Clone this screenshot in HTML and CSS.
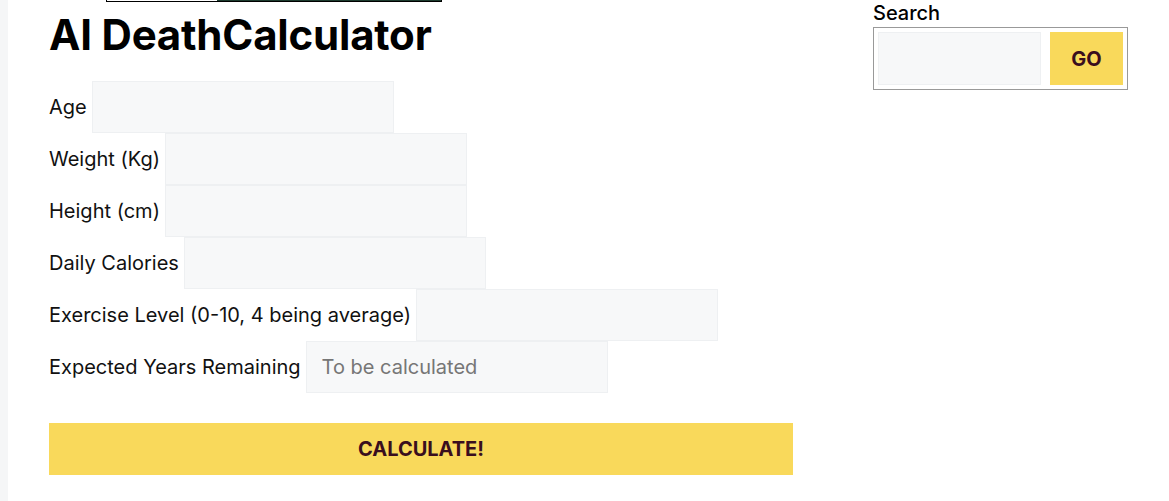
FILE: index.html
```html
<!DOCTYPE html>
<html lang="en">
<head>
<meta charset="utf-8">
<title>AI DeathCalculator</title>
<link rel="stylesheet" href="styles.css">
</head>
<body>
<div class="page">
  <main class="main">
    <div class="topbar"></div>
    <h1 class="title">AI DeathCalculator</h1>
    <form class="calc">
      <div class="row"><label class="lbl">Age</label><input class="field" type="text"></div>
      <div class="row"><label class="lbl">Weight (Kg)</label><input class="field" type="text"></div>
      <div class="row"><label class="lbl">Height (cm)</label><input class="field" type="text"></div>
      <div class="row"><label class="lbl">Daily Calories</label><input class="field" type="text"></div>
      <div class="row"><label class="lbl">Exercise Level (0-10, 4 being average)</label><input class="field" type="text"></div>
      <div class="row"><label class="lbl">Expected Years Remaining</label><input class="field" type="text" placeholder="To be calculated"></div>
      <button class="calc-btn" type="button">CALCULATE!</button>
    </form>
  </main>
  <aside class="side">
    <label class="search-lbl">Search</label>
    <div class="search-box">
      <input class="search-field" type="text">
      <button class="go-btn" type="button">GO</button>
    </div>
  </aside>
</div>
</body>
</html>
```

FILE: styles.css
```css
* { box-sizing: border-box; }
html, body { margin: 0; padding: 0; background: #ffffff; }
body {
  font-family: Inter, "Noto Sans", "Liberation Sans", sans-serif;
  color: #111111;
  min-height: 501px;
}
.page {
  display: flex;
  gap: 80px;
  padding-left: 41px;
  border-left: 8px solid #f5f6f7;
  min-height: 501px;
}
.main { width: 744px; }
.topbar {
  margin-left: 57px;
  width: 336px;
  height: 2px;
  border: 1px solid #000;
  border-top: none;
  background: linear-gradient(to right, #ffffff 0, #ffffff 110px, #1c3b2d 110px);
}
.title {
  margin: 9px 0 22px;
  font-size: 42px;
  line-height: 48px;
  font-weight: 700;
  color: #000;
  letter-spacing: -0.2px;
}
.calc { display: flex; flex-direction: column; align-items: flex-start; }
.row { display: flex; align-items: center; gap: 5px; height: 52px; }
.lbl { font-size: 20px; color: #111; }
.field {
  width: 302px;
  height: 52px;
  border: 1px solid #eef0f2;
  background: #f7f8f9;
  padding: 0 15px;
  font-family: inherit;
  font-size: 20px;
  color: #333;
  outline: none;
}
.field::placeholder { color: #767676; }
.calc-btn {
  margin-top: 30px;
  width: 744px;
  height: 52px;
  border: none;
  background: #f9d95b;
  color: #3a0e1e;
  font-family: inherit;
  font-size: 20px;
  font-weight: 700;
  cursor: pointer;
}
.side { width: 255px; }
.search-lbl {
  display: block;
  font-size: 20px;
  line-height: 27px;
  font-weight: 500;
  color: #000;
}
.search-box {
  display: flex;
  gap: 9px;
  border: 1px solid #999999;
  padding: 4px;
}
.search-field {
  width: 163px;
  height: 53px;
  border: 1px solid #eef0f2;
  background: #f7f8f9;
  outline: none;
  font-family: inherit;
  font-size: 20px;
}
.go-btn {
  width: 73px;
  height: 53px;
  border: none;
  background: #f9d95b;
  color: #3a0e1e;
  font-family: inherit;
  font-size: 20px;
  font-weight: 700;
}
```
